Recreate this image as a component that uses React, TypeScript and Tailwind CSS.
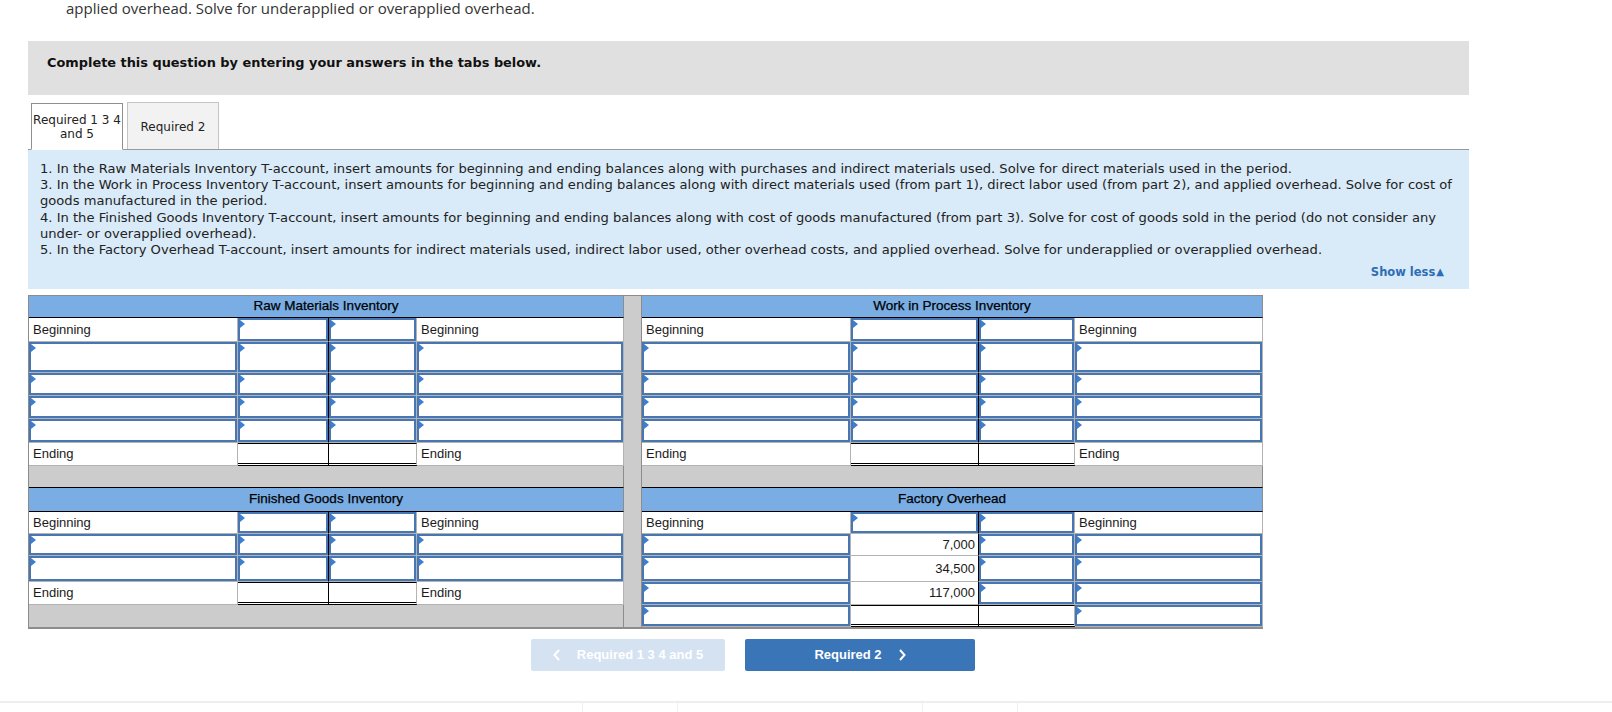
import React from "react";

type Spec = string; // "L:text" label, "I" input, "T" total, "V:text" value

type Row = { kind: "header"; title: string } | { kind: "gray"; last?: boolean } | { kind: "cells"; cells: Spec[] };

const ROW_H = "grid-rows-[22px_24px_31px_23px_23px_24px_23px_22px_24px_22px_22px_26px_23px_22px]";

const leftRows: Row[] = [
    { kind: "header", title: "Raw Materials Inventory" },
    { kind: "cells", cells: ["L:Beginning", "I", "I", "L:Beginning"] },
    { kind: "cells", cells: ["I", "I", "I", "I"] },
    { kind: "cells", cells: ["I", "I", "I", "I"] },
    { kind: "cells", cells: ["I", "I", "I", "I"] },
    { kind: "cells", cells: ["I", "I", "I", "I"] },
    { kind: "cells", cells: ["L:Ending", "T", "T", "L:Ending"] },
    { kind: "gray" },
    { kind: "header", title: "Finished Goods Inventory" },
    { kind: "cells", cells: ["L:Beginning", "I", "I", "L:Beginning"] },
    { kind: "cells", cells: ["I", "I", "I", "I"] },
    { kind: "cells", cells: ["I", "I", "I", "I"] },
    { kind: "cells", cells: ["L:Ending", "T", "T", "L:Ending"] },
    { kind: "gray", last: true },
];

const rightRows: Row[] = [
    { kind: "header", title: "Work in Process Inventory" },
    { kind: "cells", cells: ["L:Beginning", "I", "I", "L:Beginning"] },
    { kind: "cells", cells: ["I", "I", "I", "I"] },
    { kind: "cells", cells: ["I", "I", "I", "I"] },
    { kind: "cells", cells: ["I", "I", "I", "I"] },
    { kind: "cells", cells: ["I", "I", "I", "I"] },
    { kind: "cells", cells: ["L:Ending", "T", "T", "L:Ending"] },
    { kind: "gray" },
    { kind: "header", title: "Factory Overhead" },
    { kind: "cells", cells: ["L:Beginning", "I", "I", "L:Beginning"] },
    { kind: "cells", cells: ["I", "V:7,000", "I", "I"] },
    { kind: "cells", cells: ["I", "V:34,500", "I", "I"] },
    { kind: "cells", cells: ["I", "V:117,000", "I", "I"] },
    { kind: "cells", cells: ["I", "T", "T", "I"] },
];

function Marker() {
    return (
        <span className="absolute left-0 top-0 w-0 h-0 border-y-[4px] border-y-transparent border-l-[5px] border-l-[#3b7fd2]" />
    );
}

function Cell({ spec, col }: { spec: Spec; col: number }) {
    const mid = col === 1 ? "border-r-black" : "";
    const base = `border-r border-b border-[#b3b3b3] ${mid}`;

    if (spec === "I") {
        return (
            <div className={base}>
                <div className="relative h-full w-full border-2 border-[#4776b3] bg-white">
                    <Marker />
                </div>
            </div>
        );
    }
    if (spec === "T") {
        return (
            <div
                className={`border-r border-[#b3b3b3] ${mid} border-t border-t-black border-b-[3px] border-b-black border-double`}
            />
        );
    }
    if (spec.startsWith("V:")) {
        return (
            <div className={`${base} flex items-center justify-end pr-[3px] text-[13px] text-[#1a1a1a]`}>
                {spec.slice(2)}
            </div>
        );
    }
    return (
        <div className={`${base} flex items-center pl-[4px] text-[13px] text-[#1a1a1a]`}>{spec.slice(2)}</div>
    );
}

function TGrid({ rows, cols }: { rows: Row[]; cols: string }) {
    return (
        <div className={`grid ${cols} ${ROW_H}`}>
            {rows.map((row, i) => {
                if (row.kind === "header") {
                    return (
                        <div
                            key={i}
                            className="col-span-4 flex items-center justify-center bg-[#79ade3] border-r border-[#8c8c8c] border-b border-b-black text-[13.5px] text-black [-webkit-text-stroke:0.25px_#000]"
                        >
                            {row.title}
                        </div>
                    );
                }
                if (row.kind === "gray") {
                    return (
                        <div
                            key={i}
                            className={`col-span-4 bg-[#cccccc] border-r border-[#8c8c8c] ${row.last ? "" : "border-b border-b-black"}`}
                        />
                    );
                }
                return row.cells.map((c, j) => <Cell key={`${i}-${j}`} spec={c} col={j} />);
            })}
        </div>
    );
}

function Chevron({ dir }: { dir: "left" | "right" }) {
    return (
        <svg width="8" height="12" viewBox="0 0 8 12" className="shrink-0">
            <polyline
                points={dir === "left" ? "6,1 1.5,6 6,11" : "2,1 6.5,6 2,11"}
                fill="none"
                stroke="white"
                strokeWidth="2"
            />
        </svg>
    );
}

export default function App() {
    return (
        <div className="relative w-[1612px] h-[712px] overflow-hidden bg-white font-['Liberation_Sans',Arial,sans-serif]">
            {/* end of the question text, scrolled partly out of view */}
            <p className="pl-[66px] -mt-[2px] text-[15px] leading-[20px] text-[#333] font-['Open_Sans',sans-serif] whitespace-nowrap">
                applied overhead. Solve for underapplied or overapplied overhead.
            </p>

            <div className="ml-[28px] w-[1441px]">
                <div className="mt-[23px] h-[54px] bg-[#e0e0e0] pl-[19px] pt-[14px] leading-[16px] font-['DejaVu_Sans',Verdana,sans-serif] font-bold text-[12.9px] text-[#111]">
                    Complete this question by entering your answers in the tabs below.
                </div>

                {/* tabs */}
                <div className="mt-[8px] h-[47px] flex items-end gap-[4px] pl-[3px] border-b border-[#9a9a9a] font-['DejaVu_Sans',Verdana,sans-serif] text-[12px] text-[#222]">
                    <div className="w-[92px] h-[47px] -mb-px bg-white border border-[#8f8f8f] border-b-white flex items-center justify-center text-center leading-[14px]">
                        Required 1 3 4
                        <br />
                        and 5
                    </div>
                    <div className="w-[92px] h-[47px] bg-[#f2f2f2] border border-b-0 border-[#c4c4c4] flex items-center justify-center pt-[2px]">
                        Required 2
                    </div>
                </div>

                {/* instructions */}
                <div className="h-[139px] bg-[#d9eaf8] pl-[12px] pr-[25px] pt-[11px] font-['DejaVu_Sans',Verdana,sans-serif] text-[13.1px] leading-[16.2px] text-[#222]">
                    <p className="whitespace-nowrap">
                        1. In the Raw Materials Inventory T-account, insert amounts for beginning and ending balances along with purchases and indirect materials used. Solve for direct materials used in the period.
                        <br />
                        3. In the Work in Process Inventory T-account, insert amounts for beginning and ending balances along with direct materials used (from part 1), direct labor used (from part 2), and applied overhead. Solve for cost of
                        <br />
                        goods manufactured in the period.
                        <br />
                        4. In the Finished Goods Inventory T-account, insert amounts for beginning and ending balances along with cost of goods manufactured (from part 3). Solve for cost of goods sold in the period (do not consider any
                        <br />
                        under- or overapplied overhead).
                        <br />
                        5. In the Factory Overhead T-account, insert amounts for indirect materials used, indirect labor used, other overhead costs, and applied overhead. Solve for underapplied or overapplied overhead.
                    </p>
                    <div className="mt-[6px] flex justify-end text-[11.5px] font-bold text-[#2d6db5] leading-[16px]">
                        Show less<span className="text-[10px] ml-[1px]">▲</span>
                    </div>
                </div>

                {/* T-accounts */}
                <div className="mt-[6px] flex w-fit border-t border-l border-b-2 border-[#8c8c8c]">
                    <TGrid rows={leftRows} cols="grid-cols-[209px_91px_88px_207px]" />
                    <div className="w-[18px] bg-[#cccccc] border-r border-[#8c8c8c]" />
                    <TGrid rows={rightRows} cols="grid-cols-[209px_128px_96px_188px]" />
                </div>

                {/* navigation */}
                <div className="mt-[10px] pl-[9px] flex justify-center gap-[20px] text-[13px] font-bold text-white">
                    <button className="w-[194px] h-[32px] rounded-[2px] bg-[#d5e2f1] flex items-center justify-center gap-[16px]">
                        <Chevron dir="left" />
                        Required 1 3 4 and 5
                    </button>
                    <button className="w-[230px] h-[32px] rounded-[2px] bg-[#3a75b8] flex items-center justify-center gap-[16px]">
                        Required 2
                        <Chevron dir="right" />
                    </button>
                </div>
            </div>

            {/* footer strip */}
            <div className="mt-[30px] border-t-2 border-[#eeeeee] h-[12px] flex">
                <div className="ml-[582px] w-[96px] border-x border-[#f0f0f0]" />
                <div className="ml-[244px] w-[96px] border-x border-[#f0f0f0]" />
            </div>
        </div>
    );
}
